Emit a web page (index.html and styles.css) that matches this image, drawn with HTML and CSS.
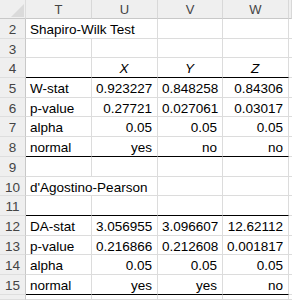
FILE: index.html
```html
<!DOCTYPE html>
<html>
<head>
<meta charset="utf-8">
<link rel="stylesheet" href="styles.css">
</head>
<body>
<div class="sheet">
  <div class="corner"><span class="tri"></span></div>
  <div class="ch">T</div><div class="ch">U</div><div class="ch">V</div><div class="ch">W</div><div class="ch"></div>

  <div class="rh">2</div><div class="c span2">Shapiro-Wilk Test</div><div class="c"></div><div class="c"></div><div class="c"></div>
  <div class="rh">3</div><div class="c"></div><div class="c"></div><div class="c"></div><div class="c"></div><div class="c"></div>
  <div class="rh">4</div><div class="c dk"></div><div class="c dk ctr"><i>X</i></div><div class="c dk ctr"><i>Y</i></div><div class="c dk ctr"><i>Z</i></div><div class="c"></div>
  <div class="rh">5</div><div class="c">W-stat</div><div class="c num">0.923227</div><div class="c num">0.848258</div><div class="c num">0.84306</div><div class="c"></div>
  <div class="rh">6</div><div class="c">p-value</div><div class="c num">0.27721</div><div class="c num">0.027061</div><div class="c num">0.03017</div><div class="c"></div>
  <div class="rh">7</div><div class="c">alpha</div><div class="c num">0.05</div><div class="c num">0.05</div><div class="c num">0.05</div><div class="c"></div>
  <div class="rh">8</div><div class="c dk">normal</div><div class="c dk num">yes</div><div class="c dk num">no</div><div class="c dk num">no</div><div class="c"></div>
  <div class="rh">9</div><div class="c"></div><div class="c"></div><div class="c"></div><div class="c"></div><div class="c"></div>
  <div class="rh">10</div><div class="c span2">d'Agostino-Pearson</div><div class="c"></div><div class="c"></div><div class="c"></div>
  <div class="rh">11</div><div class="c dk"></div><div class="c dk"></div><div class="c dk"></div><div class="c dk"></div><div class="c"></div>
  <div class="rh">12</div><div class="c">DA-stat</div><div class="c num">3.056955</div><div class="c num">3.096607</div><div class="c num">12.62112</div><div class="c"></div>
  <div class="rh">13</div><div class="c">p-value</div><div class="c num">0.216866</div><div class="c num">0.212608</div><div class="c num">0.001817</div><div class="c"></div>
  <div class="rh">14</div><div class="c">alpha</div><div class="c num">0.05</div><div class="c num">0.05</div><div class="c num">0.05</div><div class="c"></div>
  <div class="rh">15</div><div class="c dk">normal</div><div class="c dk num">yes</div><div class="c dk num">yes</div><div class="c dk num">no</div><div class="c"></div>
  <div class="rh"></div><div class="c"></div><div class="c"></div><div class="c"></div><div class="c"></div><div class="c"></div>
</div>
</body>
</html>
```
FILE: styles.css
```css
html, body {
  margin: 0;
  padding: 0;
  background: #ffffff;
  overflow: hidden;
}
.sheet {
  display: grid;
  grid-template-columns: 26px 66px 66px 65px 66px 3px;
  grid-template-rows: 19px repeat(14, 19.7px) 5px;
  font-family: "Liberation Sans", Arial, sans-serif;
  font-size: 13.5px;
  color: #000;
  width: 292px;
  overflow: hidden;
}
.sheet > div {
  box-sizing: border-box;
  border-right: 1px solid #dcdcdc;
  border-bottom: 1px solid #dcdcdc;
  white-space: nowrap;
  overflow: visible;
  line-height: 19px;
  padding-top: 1px;
}
.corner {
  background: #efefef;
  display: flex;
  align-items: flex-end;
  justify-content: flex-end;
  padding: 0 1px 1px 0 !important;
  border-bottom-color: #c8c8c8 !important;
}
.tri {
  width: 0;
  height: 0;
  border-left: 13px solid transparent;
  border-bottom: 13px solid #dadada;
}
.ch {
  background: #efefef;
  color: #444;
  text-align: center;
  font-size: 13px;
  line-height: 17px !important;
  border-bottom-color: #c8c8c8 !important;
  border-right-color: #d8d8d8 !important;
}
.rh {
  background: #efefef;
  color: #444;
  text-align: center;
  font-size: 13.5px;
  border-right-color: #c8c8c8 !important;
  border-bottom-color: #dedede !important;
}
.c {
  padding-left: 4px;
  padding-right: 5px;
}
.span2 {
  grid-column: span 2;
}
.num {
  text-align: right;
}
.ctr {
  text-align: center;
}
.dk {
  border-bottom-color: #000 !important;
}
```
